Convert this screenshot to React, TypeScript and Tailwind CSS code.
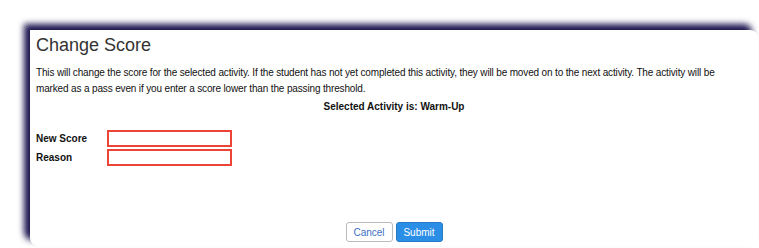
import React from "react";

export default function App() {
  return (
    <div className="w-[759px] h-[248px] overflow-hidden bg-white pl-[30px] pt-[30px]" style={{ fontFamily: '"Liberation Sans", Arial, sans-serif' }}>
      <div className="w-[728px] h-[216px] bg-white shadow-[-6px_-6px_6px_#1d1650] rounded-tr-[8px] rounded-bl-[8px] flex flex-col px-[6px] text-[#222]">
        <h1 className="text-[18px] leading-[20px] text-[#333] mt-[5px]">Change Score</h1>
        <p className="text-[10px] leading-[16px] mt-[10px] text-[#111] tracking-[-0.15px] pr-[16px]">
          This will change the score for the selected activity. If the student has not yet completed this activity, they will be moved on to the next activity. The activity will be marked as a pass even if you enter a score lower than the passing threshold.
        </p>
        <p className="text-[10px] leading-[16px] mt-[2px] font-bold text-center text-[#111]">Selected Activity is: Warm-Up</p>
        <div className="mt-[15px] flex flex-col gap-[2px]">
          <div className="flex items-center h-[17px]">
            <label className="w-[71px] text-[10px] font-bold text-[#111]">New Score</label>
            <input className="w-[125px] h-[17px] border-2 border-[#ec4537] bg-white outline-none" />
          </div>
          <div className="flex items-center h-[17px]">
            <label className="w-[71px] text-[10px] font-bold text-[#111]">Reason</label>
            <input className="w-[125px] h-[17px] border-2 border-[#ec4537] bg-white outline-none" />
          </div>
        </div>
        <div className="flex-1" />
        <div className="flex justify-center gap-[3px] mb-[4px]">
          <button className="w-[47px] h-[20px] text-[10px] text-[#3a6fc4] bg-white border border-[#bbb] rounded-[3px]">Cancel</button>
          <button className="w-[47px] h-[20px] text-[10px] text-white bg-[#2b8ee6] border border-[#2a77c2] rounded-[3px]">Submit</button>
        </div>
      </div>
    </div>
  );
}
